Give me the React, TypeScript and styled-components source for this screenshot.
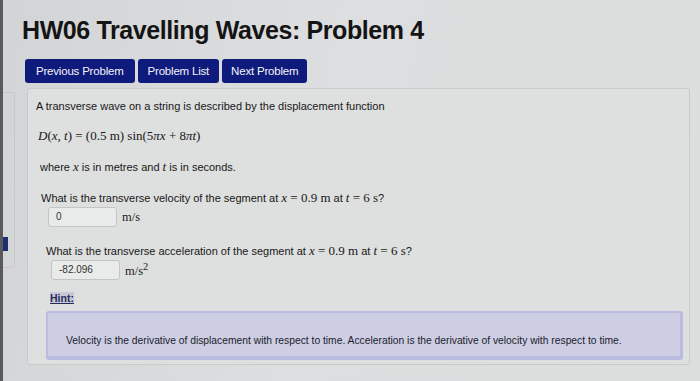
import React from "react";
import styled, { createGlobalStyle } from "styled-components";

const GlobalStyle = createGlobalStyle`
  html, body {
    margin: 0;
    padding: 0;
    background: #d9dadb;
  }
`;

const Page = styled.div`
  display: flex;
  height: 381px;
  width: 700px;
  overflow: hidden;
  background: linear-gradient(100deg, #d3d4d5 0%, #dddedf 45%, #dcdddd 100%);
  font-family: "Liberation Sans", Arial, sans-serif;
  color: #1c1c1c;
`;

const Bezel = styled.div`
  width: 3px;
  flex: none;
  background: #5a5a5c;
`;

const Sidebar = styled.div`
  width: 12px;
  flex: none;
`;

const SideCard = styled.div`
  margin-top: 92px;
  height: 176px;
  border: 1px solid #c6c7c8;
  border-left: none;
  border-radius: 0 0 5px 0;
  padding-top: 144px;
  box-sizing: border-box;
`;

const SideTab = styled.div`
  width: 5px;
  height: 14px;
  background: #1d2f6e;
`;

const Main = styled.div`
  flex: 1;
  padding-left: 7px;
  display: flex;
  flex-direction: column;
`;

const Title = styled.h1`
  margin: 15px 0 0 0;
  font-size: 25px;
  line-height: 30px;
  font-weight: 700;
  letter-spacing: -0.4px;
  color: #141414;
`;

const ButtonRow = styled.div`
  display: flex;
  gap: 3px;
  margin: 14px 0 0 3px;
`;

const NavButton = styled.button<{ $pad: number }>`
  height: 24px;
  padding: 0 ${(p) => p.$pad}px;
  border: none;
  border-radius: 3px;
  background: #0e1a7c;
  color: #f4f4f8;
  font-family: "Liberation Sans", Arial, sans-serif;
  font-size: 11.5px;
  letter-spacing: -0.2px;
`;

const Panel = styled.div`
  margin: 5px 0 0 5px;
  width: 663px;
  height: 277px;
  box-sizing: border-box;
  border: 1px solid #c9cacb;
  border-radius: 3px;
  background: #dedfdf;
  padding-top: 9px;
`;

const Line = styled.div<{ $indent: number; $top: number }>`
  margin-left: ${(p) => p.$indent}px;
  margin-top: ${(p) => p.$top}px;
  height: 14px;
  line-height: 14px;
  font-size: 11px;
  white-space: nowrap;
  color: #181818;
`;

const Formula = styled.span`
  font-family: "Liberation Serif", "Times New Roman", serif;
  font-size: 13px;
`;

const Var = styled.i`
  font-family: "Liberation Serif", "Times New Roman", serif;
  font-size: 13px;
`;

const Unit = styled.span`
  font-family: "Liberation Serif", "Times New Roman", serif;
  font-size: 12.5px;
`;

const AnswerRow = styled.div<{ $indent: number }>`
  display: flex;
  align-items: center;
  gap: 5px;
  margin: 2px 0 0 ${(p) => p.$indent}px;
`;

const AnswerBox = styled.div`
  width: 69px;
  height: 20px;
  box-sizing: border-box;
  border: 1px solid #c4c5c6;
  border-radius: 3px;
  background: #e9eaea;
  padding-left: 7px;
  font-size: 10px;
  line-height: 18px;
  color: #333;
`;

const HintLink = styled.span`
  display: inline-block;
  margin: 12px 0 0 22px;
  font-size: 10.5px;
  font-weight: 700;
  line-height: 12px;
  color: #262a5c;
  background: #c6c8d6;
  text-decoration: underline;
`;

const HintBox = styled.div`
  margin: 5px 0 0 18px;
  width: 637px;
  height: 49px;
  box-sizing: border-box;
  border: 2px solid #b9bbe0;
  border-bottom-width: 4px;
  border-right-width: 3px;
  border-radius: 3px;
  background: #cdcee4;
  padding: 21px 0 0 18px;
  font-size: 10.3px;
  line-height: 14px;
  color: #1c1c2a;
  white-space: nowrap;
`;

export default function App() {
  return (
    <>
      <GlobalStyle />
      <Page>
        <Bezel />
        <Sidebar>
          <SideCard>
            <SideTab />
          </SideCard>
        </Sidebar>
        <Main>
          <Title>HW06 Travelling Waves: Problem 4</Title>
          <ButtonRow>
            <NavButton $pad={11}>Previous Problem</NavButton>
            <NavButton $pad={10}>Problem List</NavButton>
            <NavButton $pad={9}>Next Problem</NavButton>
          </ButtonRow>
          <Panel>
            <Line $indent={8} $top={1}>
              A transverse wave on a string is described by the displacement function
            </Line>
            <Line $indent={10} $top={16}>
              <Formula>
                <i>D</i>(<i>x</i>, <i>t</i>) = (0.5 m) sin(5<i>πx</i> + 8<i>πt</i>)
              </Formula>
            </Line>
            <Line $indent={12} $top={17}>
              where <Var>x</Var> is in metres and <Var>t</Var> is in seconds.
            </Line>
            <Line $indent={13} $top={17}>
              What is the transverse velocity of the segment at{" "}
              <Formula>
                <i>x</i> = 0.9 m
              </Formula>{" "}
              at{" "}
              <Formula>
                <i>t</i> = 6 s
              </Formula>
              ?
            </Line>
            <AnswerRow $indent={20}>
              <AnswerBox>0</AnswerBox>
              <Unit>m/s</Unit>
            </AnswerRow>
            <Line $indent={18} $top={17}>
              What is the transverse acceleration of the segment at{" "}
              <Formula>
                <i>x</i> = 0.9 m
              </Formula>{" "}
              at{" "}
              <Formula>
                <i>t</i> = 6 s
              </Formula>
              ?
            </Line>
            <AnswerRow $indent={23}>
              <AnswerBox>-82.096</AnswerBox>
              <Unit>
                m/s<sup>2</sup>
              </Unit>
            </AnswerRow>
            <HintLink>Hint:</HintLink>
            <HintBox>
              Velocity is the derivative of displacement with respect to time. Acceleration is the
              derivative of velocity with respect to time.
            </HintBox>
          </Panel>
        </Main>
      </Page>
    </>
  );
}
